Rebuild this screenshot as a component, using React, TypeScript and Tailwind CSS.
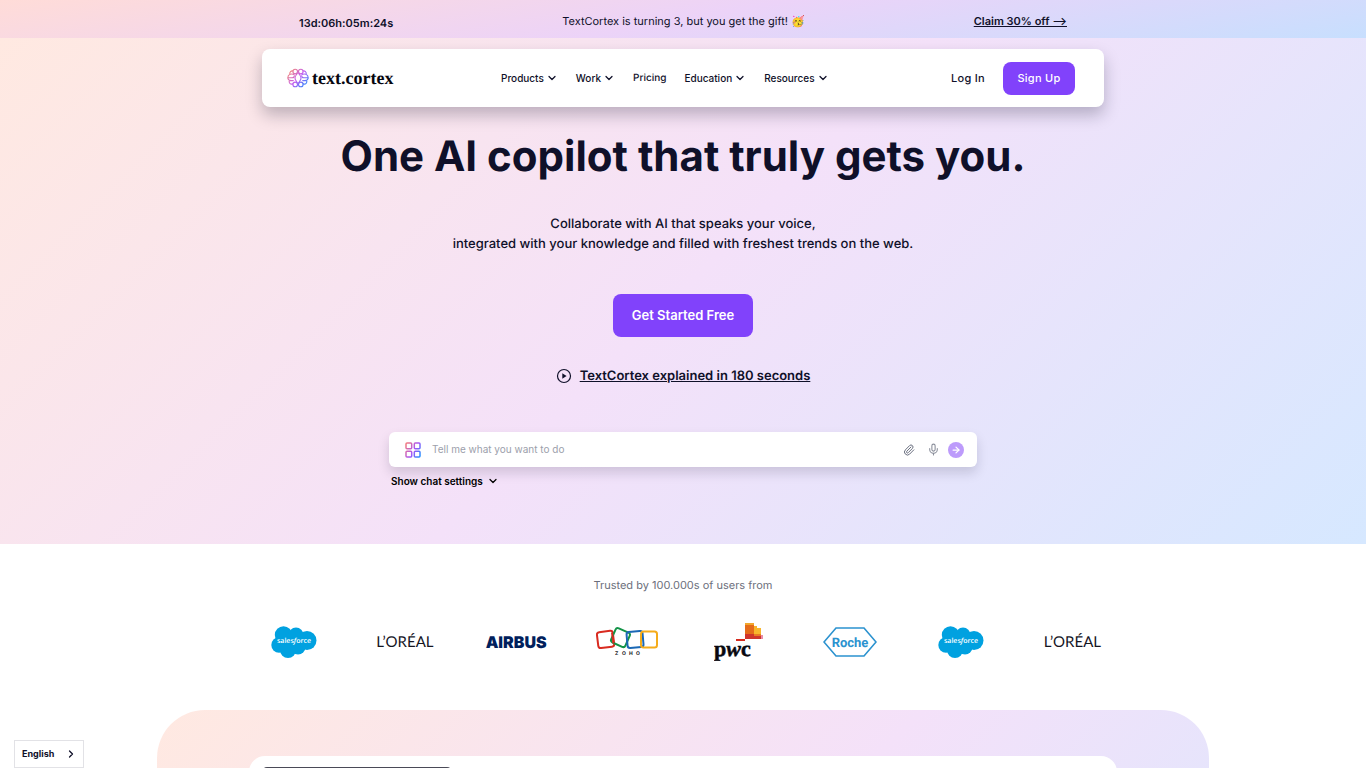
import { ArrowRight, ChevronDown, ChevronRight, Mic, Paperclip } from "lucide-react";

const navItems = [
  { label: "Products", menu: true },
  { label: "Work", menu: true },
  { label: "Pricing", menu: false },
  { label: "Education", menu: true },
  { label: "Resources", menu: true },
];

function BrainIcon() {
  return (
    <svg width="22" height="20" viewBox="0 0 22 20" fill="none" stroke="url(#brain)" strokeWidth="1.100" strokeLinecap="round">
      <defs>
        <linearGradient id="brain" x1="2" y1="2" x2="20" y2="18" gradientUnits="userSpaceOnUse">
          <stop stopColor="#f5896b" />
          <stop offset="0.5" stopColor="#c45cf0" />
          <stop offset="1" stopColor="#1f8cff" />
        </linearGradient>
      </defs>
      <circle cx="8.200" cy="3.600" r="2.300" />
      <circle cx="13.800" cy="3.600" r="2.300" />
      <circle cx="8.200" cy="16.400" r="2.300" />
      <circle cx="13.800" cy="16.400" r="2.300" />
      <path d="M6 3C4.200 2.500 2.300 4 2.800 6.300M7 6.600c-2-1.300-6.200-.6-6.200 3.200h4.500a2 2 0 0 0 2-2M.8 10c.2 1.700 1.700 2.600 3.200 2.600h2.300M2.400 12.300c-1 2.600 1 4.300 3.500 3.600" />
      <path d="M16 3c1.800-.5 3.700 1 3.200 3.300M15 6.600c2-1.300 6.200-.6 6.200 3.200h-4.500a2 2 0 0 1-2-2M21.200 10c-.2 1.700-1.700 2.600-3.200 2.600h-2.300M19.600 12.300c1 2.600-1 4.300-3.500 3.600" />
      <path d="M10.300 5C9.800 7 8 7.500 8 10s1.800 3 2.300 5M11.700 5c.5 2 2.300 2.500 2.300 5s-1.800 3-2.300 5" />
    </svg>
  );
}

function GridIcon() {
  return (
    <svg width="16" height="16" viewBox="0 0 16 16" fill="none" stroke="url(#tiles)" strokeWidth="1.500">
      <defs>
        <linearGradient id="tiles" x1="0" y1="3" x2="16" y2="13" gradientUnits="userSpaceOnUse">
          <stop stopColor="#f47c7c" />
          <stop offset="0.55" stopColor="#a855f7" />
          <stop offset="1" stopColor="#2490ff" />
        </linearGradient>
      </defs>
      <rect x="1" y="1" width="5.700" height="5.700" rx="1" />
      <rect x="9.300" y="1" width="5.700" height="5.700" rx="1" />
      <rect x="1" y="9.300" width="5.700" height="5.700" rx="1" />
      <rect x="9.300" y="9.300" width="5.700" height="5.700" rx="1" />
    </svg>
  );
}

function PlayIcon() {
  return (
    <svg width="16" height="16" viewBox="0 0 16 16" fill="none">
      <circle cx="8" cy="8" r="6.500" stroke="currentColor" strokeWidth="1.200" />
      <path d="M6.300 5.300v5.400L10.600 8z" fill="currentColor" />
    </svg>
  );
}

function Salesforce() {
  return (
    <svg width="46" height="32" viewBox="0 0 46 32" role="img" aria-label="Salesforce">
      <g fill="#00a1e0">
        <circle cx="12.500" cy="9" r="8.700" />
        <circle cx="25" cy="9" r="7.500" />
        <circle cx="36" cy="14.500" r="9.500" />
        <circle cx="8" cy="19" r="7.700" />
        <circle cx="17" cy="24" r="8" />
        <circle cx="27" cy="21" r="7.500" />
        <rect x="8" y="9" width="26" height="15" />
      </g>
      <text x="23" y="17" textAnchor="middle" fill="#fff" fontFamily="Open Sans, sans-serif" fontSize="7" fontWeight="600">
        sales<tspan fontStyle="italic">f</tspan>orce
      </text>
    </svg>
  );
}

function Loreal() {
  return <span className="font-['Lato',sans-serif] text-[15px] leading-5 text-[#15151f]">L’ORÉAL</span>;
}

function Airbus() {
  return <span className="text-[16px] leading-5 font-black text-[#00205b]">AIRBUS</span>;
}

function Zoho() {
  return (
    <svg width="62" height="30" viewBox="0 0 62 30" fill="none" strokeWidth="2" role="img" aria-label="Zoho">
      <rect x="1.500" y="4.500" width="16" height="16" rx="2.500" stroke="#d92b20" transform="rotate(-7 9 12)" />
      <rect x="17" y="3" width="15.500" height="15.500" rx="2.500" stroke="#129347" transform="rotate(24 25 10)" />
      <rect x="31" y="4.500" width="16" height="16" rx="2.500" stroke="#1b68b5" transform="rotate(-5 39 12)" />
      <rect x="45" y="4.500" width="16" height="16" rx="2.500" stroke="#f5ac1b" />
      <path d="M16 5.500l1.500 11" stroke="#d92b20" />
      <g fill="#202026" fontFamily="Inter, sans-serif" fontSize="5" fontWeight="700">
        <text x="19" y="28">Z</text>
        <text x="26" y="28">O</text>
        <text x="33" y="28">H</text>
        <text x="40" y="28">O</text>
      </g>
    </svg>
  );
}

function Pwc() {
  return (
    <svg width="50" height="40" viewBox="0 0 50 40" role="img" aria-label="PwC">
      <path d="M31 1h9v16h-9z" fill="#e56b1a" />
      <path d="M31 1h9v2h-9z" fill="#f2a72d" />
      <path d="M40 4h3v2h4v9h-7z" fill="#f8b52c" />
      <path d="M31 12h16v5H31z" fill="#d0342c" />
      <path d="M40 12h7v2h-7z" fill="#ea7a22" />
      <path d="M47 13h2v4h-2z" fill="#e98daa" />
      <path d="M22 17h9v2h-9z" fill="#d52b1e" />
      <text x="0" y="34" fill="#08080f" stroke="#08080f" strokeWidth="0.500" fontFamily="Liberation Serif, serif" fontSize="22" fontWeight="700">
        p<tspan fontStyle="italic">w</tspan>c
      </text>
    </svg>
  );
}

function Roche() {
  return (
    <svg width="54" height="30" viewBox="0 0 54 30" role="img" aria-label="Roche">
      <path d="M13 1h28l12 14-12 14H13L1 15z" fill="none" stroke="#2b92cf" strokeWidth="1.600" />
      <text x="27" y="20" textAnchor="middle" fill="#2b92cf" fontFamily="Roboto, sans-serif" fontSize="13" fontWeight="700">
        Roche
      </text>
    </svg>
  );
}

const logos = [Salesforce, Loreal, Airbus, Zoho, Pwc, Roche, Salesforce, Loreal];

export default function App() {
  return (
    <div className="relative h-screen overflow-hidden bg-white font-['Inter',sans-serif] text-[#0f1029] [text-rendering:geometricPrecision]">
      <div className="h-[38px] bg-[linear-gradient(170deg,#ffdcd8_0%,#ecd3f8_50%,#c7dffe_100%)]">
        <div className="mx-auto flex h-full max-w-[768px] items-center justify-between text-[11px] leading-4">
          <span className="pt-2 font-semibold">13d:06h:05m:24s</span>
          <span className="pt-1">TextCortex is turning 3, but you get the gift! 🥳</span>
          <a href="#claim" className="pt-1 font-semibold underline">Claim 30% off --&gt;</a>
        </div>
      </div>

      <section className="bg-[linear-gradient(135deg,#ffe9e1_0%,#f4e1f9_50%,#d6e8ff_100%)] px-4 pt-[11px] pb-[55px]">
        <header className="mx-auto flex h-[58px] max-w-[842px] items-center rounded-lg bg-white pr-[29px] pl-[25px] shadow-[0_8px_16px_rgba(15,16,41,0.25)]">
          <a href="#home" className="flex w-[214px] items-center gap-[3px] font-['Liberation_Serif',serif] text-[18px] leading-6 font-bold text-[#06060f]">
            <BrainIcon />
            text.cortex
          </a>
          <nav className="flex items-center gap-[18px] text-[10px] leading-4 font-medium">
            {navItems.map((item) =>
              item.menu ? (
                <button key={item.label} className="flex items-center gap-[2px]">
                  {item.label}
                  <ChevronDown size={12} strokeWidth={2.5} />
                </button>
              ) : (
                <a key={item.label} href="#pricing">{item.label}</a>
              )
            )}
          </nav>
          <div className="ml-auto flex items-center gap-[18px] text-[11px] font-medium tracking-wide">
            <a href="#login">Log In</a>
            <button className="h-[33px] w-[72px] rounded-lg bg-[#8142fb] tracking-wide text-white">Sign Up</button>
          </div>
        </header>

        <div className="flex flex-col items-center text-center">
          <h1 className="mt-[23px] text-[42px] leading-[54px] font-bold">One AI copilot that truly gets you.</h1>
          <p className="mt-[30px] text-[13px] leading-5 font-medium">
            Collaborate with AI that speaks your voice,
            <br />
            integrated with your knowledge and filled with freshest trends on the web.
          </p>
          <button className="mt-10 h-[43px] w-[140px] rounded-lg bg-[#8142fb] text-[13px] font-semibold text-white">
            Get Started Free
          </button>
          <a href="#video" className="mt-[29px] flex items-center gap-2 text-[13px] leading-5 font-semibold">
            <PlayIcon />
            <span className="underline">TextCortex explained in 180 seconds</span>
          </a>
        </div>

        <div className="mx-auto mt-[46px] max-w-[588px]">
          <form className="flex h-[35px] items-center rounded-md bg-white pr-[13px] pl-4 shadow-[0_6px_12px_rgba(15,16,41,0.15)]">
            <GridIcon />
            <input
              type="text"
              aria-label="Prompt"
              placeholder="Tell me what you want to do"
              className="ml-[11px] min-w-0 flex-1 text-[10px] outline-none placeholder:text-[#9ca0ab]"
            />
            <button type="button" aria-label="Attach file" className="mr-3 text-[#6b7080]">
              <Paperclip size={12} />
            </button>
            <button type="button" aria-label="Dictate" className="mr-2 text-[#8b8f9b]">
              <Mic size={13} />
            </button>
            <button type="button" aria-label="Send" className="flex size-4 items-center justify-center rounded-full bg-[#bd9bfb] text-white">
              <ArrowRight size={10} strokeWidth={3} />
            </button>
          </form>
          <button className="mt-[6px] ml-[2px] flex items-center gap-1 text-[10px] leading-4 font-semibold text-black">
            Show chat settings
            <ChevronDown size={12} strokeWidth={2.5} />
          </button>
        </div>
      </section>

      <section className="pt-[33px]">
        <p className="text-center text-[11px] leading-4 text-[#6b6e7b]">Trusted by 100.000s of users from</p>
        <div className="mx-auto mt-[29px] grid h-10 max-w-[890px] grid-cols-8 place-items-center">
          {logos.map((Logo, idx) => (
            <Logo key={idx} />
          ))}
        </div>
      </section>

      <section className="mx-auto mt-12 h-[480px] w-[77%] rounded-[48px] bg-[linear-gradient(135deg,#ffe9e1_0%,#f4e1f9_50%,#d6e8ff_100%)] pt-[46px]">
        <div className="mx-auto h-[400px] max-w-[868px] rounded-2xl bg-white px-[14px] pt-[11px]">
          <div className="h-8 w-[188px] rounded bg-[#4a4a57]" />
        </div>
      </section>

      <button className="fixed bottom-0 left-[14px] flex h-7 w-[70px] items-center justify-between border border-[#e2e2e6] bg-white pr-[6px] pl-[7px] text-[9px] font-bold">
        English
        <ChevronRight size={12} strokeWidth={2.5} />
      </button>
    </div>
  );
}
